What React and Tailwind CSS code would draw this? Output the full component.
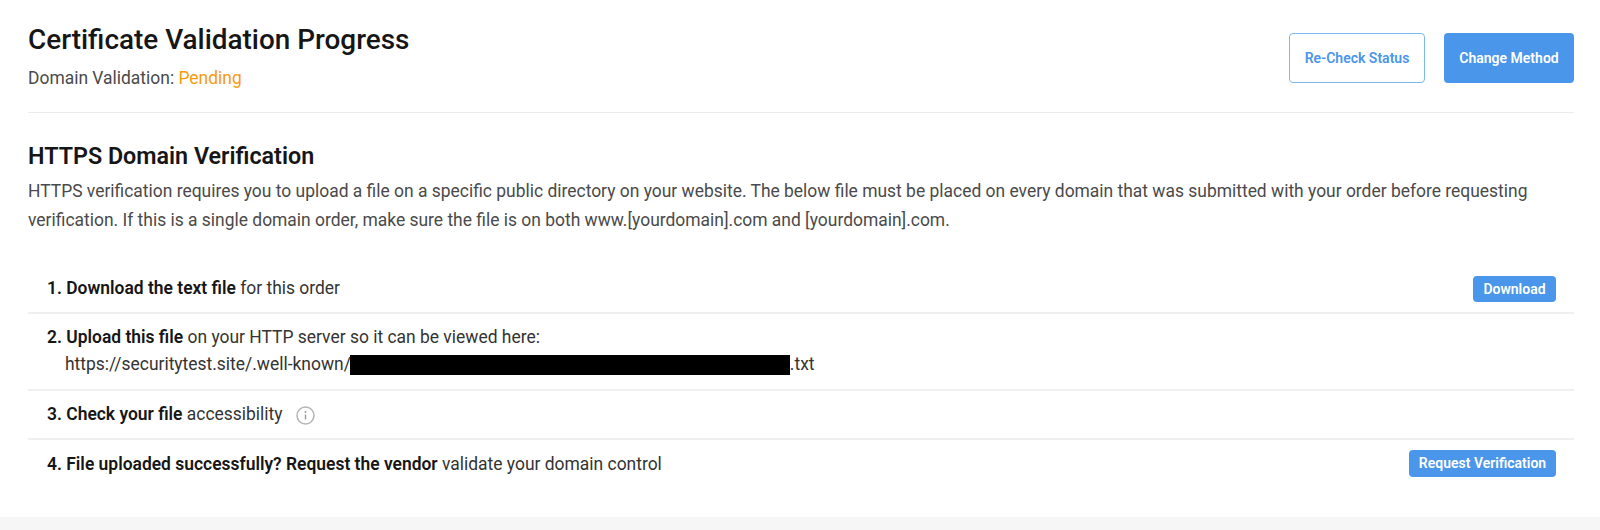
export default function App() {
  return (
    <div className="w-[1600px] h-[530px] overflow-hidden bg-white flex flex-col font-['Roboto',sans-serif]">
      <div className="h-[517px] pl-[28px] pr-[26px]">
        <div className="h-[113px] border-b border-[#ececec] flex justify-between items-start">
          <div>
            <h1 className="mt-[22px] text-[27.9px] leading-[36px] font-medium text-[#161616]">Certificate Validation Progress</h1>
            <p className="mt-[8px] text-[17.45px] leading-[24px] text-[#4a4a4a]">Domain Validation: <span className="text-[#f99b0c]">Pending</span></p>
          </div>
          <div className="flex gap-[19px] mt-[33px]">
            <button className="w-[136px] h-[50px] rounded border-[1.5px] border-[#7db7f3] bg-white text-[14px] font-semibold text-[#4a96ea]">Re-Check Status</button>
            <button className="w-[130px] h-[50px] rounded bg-[#4a96ea] text-[14px] font-semibold text-white">Change Method</button>
          </div>
        </div>
        <h2 className="mt-[28px] text-[23.3px] leading-[30px] font-semibold text-[#161616]">HTTPS Domain Verification</h2>
        <p className="mt-[6px] text-[17.45px] leading-[29px] text-[#4a4a4a]">
          HTTPS verification requires you to upload a file on a specific public directory on your website. The below file must be placed on every domain that was submitted with your order before requesting<br />
          verification. If this is a single domain order, make sure the file is on both www.[yourdomain].com and [yourdomain].com.
        </p>
        <div className="mt-[30px] text-[17.45px] leading-[27px] text-[#333]">
          <div className="h-[49px] border-b-2 border-[#f0f0f0] pl-[19px] pr-[18px] flex items-center justify-between">
            <p><b className="font-semibold text-[#161616]">1. Download the text file</b> for this order</p>
            <button className="w-[83px] h-[26px] rounded bg-[#4a96ea] text-[14px] font-semibold text-white">Download</button>
          </div>
          <div className="h-[77px] border-b-2 border-[#f0f0f0] pl-[19px] pt-[10px]">
            <p><b className="font-semibold text-[#161616]">2. Upload this file</b> on your HTTP server so it can be viewed here:</p>
            <p className="pl-[18px] flex items-center">
              <span>https://securitytest.site/.well-known/</span>
              <span className="w-[440px] h-[20px] -ml-px bg-black" />
              <span>.txt</span>
            </p>
          </div>
          <div className="h-[49px] border-b-2 border-[#f0f0f0] pl-[19px] flex items-center">
            <p><b className="font-semibold text-[#161616]">3. Check your file</b> accessibility</p>
            <svg className="ml-[13px] mt-[2px]" width="19" height="19" viewBox="0 0 19 19" fill="none">
              <circle cx="9.5" cy="9.5" r="8.5" stroke="#b5b5b5" strokeWidth="1.5" />
              <circle cx="9.5" cy="6" r="1" fill="#9a9a9a" />
              <path d="M9.5 8.5v5" stroke="#9a9a9a" strokeWidth="1.4" />
            </svg>
          </div>
          <div className="h-[49px] pl-[19px] pr-[18px] flex items-center justify-between">
            <p><b className="font-semibold text-[#161616]">4. File uploaded successfully? Request the vendor</b> validate your domain control</p>
            <button className="w-[147px] h-[27px] -mt-[2px] rounded bg-[#4a96ea] text-[14px] font-semibold text-white">Request Verification</button>
          </div>
        </div>
      </div>
      <div className="flex-1 bg-[#f6f6f6]" />
    </div>
  );
}
